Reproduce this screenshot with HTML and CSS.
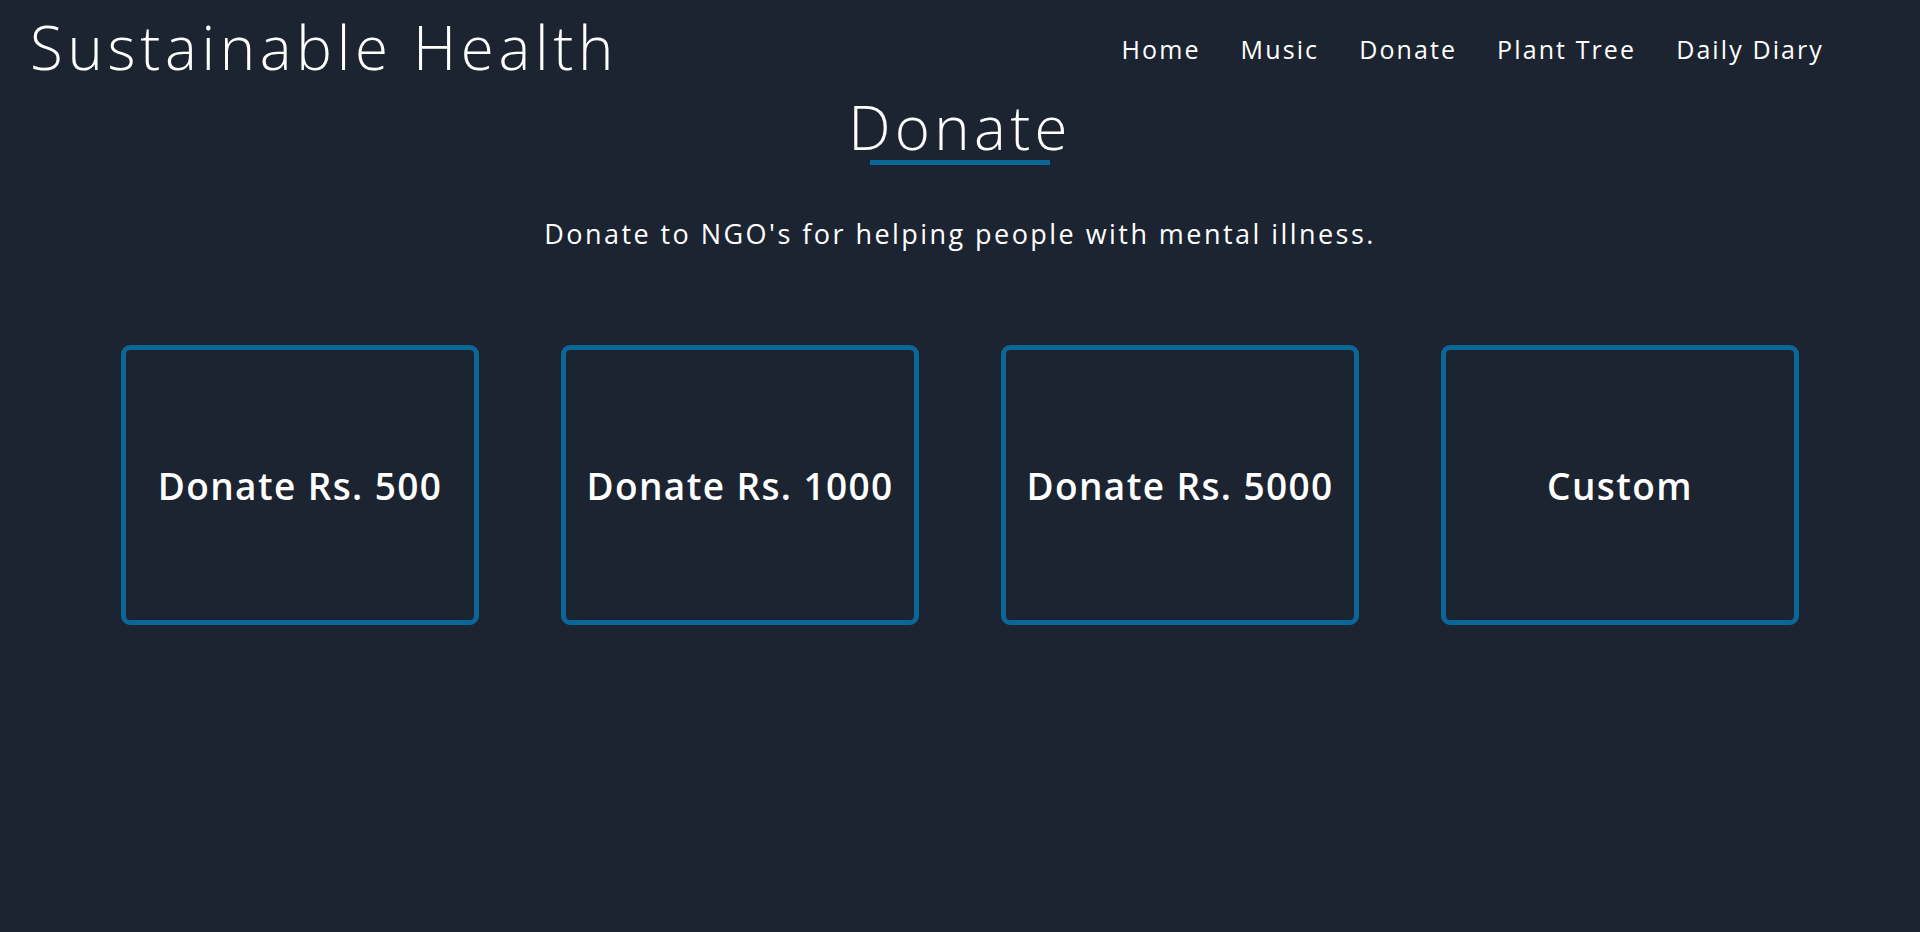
FILE: index.html
```html
<!DOCTYPE html>
<html lang="en">
<head>
<meta charset="utf-8">
<title>Sustainable Health - Donate</title>
<link rel="stylesheet" href="styles.css">
</head>
<body>
<header class="site-header">
  <div class="logo">Sustainable Health</div>
  <nav class="nav">
    <a href="#">Home</a>
    <a href="#">Music</a>
    <a href="#">Donate</a>
    <a href="#">Plant Tree</a>
    <a href="#">Daily Diary</a>
  </nav>
</header>
<main class="donate">
  <h1 class="title">Donate</h1>
  <div class="title-bar"></div>
  <p class="lead">Donate to NGO's for helping people with mental illness.</p>
  <div class="cards">
    <a class="card" href="#">Donate Rs. 500</a>
    <a class="card" href="#">Donate Rs. 1000</a>
    <a class="card" href="#">Donate Rs. 5000</a>
    <a class="card" href="#">Custom</a>
  </div>
</main>
</body>
</html>
```
FILE: styles.css
```css
* { box-sizing: border-box; }
html, body { margin: 0; padding: 0; }
body {
  background: #1c2431;
  color: #ffffff;
  font-family: "Open Sans", "Liberation Sans", sans-serif;
  min-height: 932px;
}
.site-header {
  display: flex;
  justify-content: space-between;
  align-items: flex-start;
  padding: 12px 96px 0 30px;
}
.logo {
  font-size: 60px;
  font-weight: 300;
  line-height: 70px;
  letter-spacing: 4.7px;
}
.nav {
  display: flex;
  gap: 40px;
  margin-top: 22px;
}
.nav a {
  color: #ffffff;
  text-decoration: none;
  font-size: 25px;
  line-height: 30px;
  letter-spacing: 2.1px;
}
.donate {
  display: flex;
  flex-direction: column;
  align-items: center;
}
.title {
  margin: 11px 0 0;
  font-size: 60px;
  font-weight: 300;
  line-height: 68px;
  letter-spacing: 4.3px;
}
.title-bar {
  width: 180px;
  height: 5px;
  margin-top: -1px;
  background: #0a6898;
}
.lead {
  margin: 54px 0 0;
  font-size: 27px;
  line-height: 30px;
  letter-spacing: 2.45px;
}
.cards {
  display: flex;
  justify-content: center;
  gap: 82px;
  margin-top: 96px;
}
.card {
  width: 358px;
  height: 280px;
  border: 5px solid #0a6898;
  border-radius: 9px;
  display: flex;
  align-items: center;
  justify-content: center;
  color: #ffffff;
  text-decoration: none;
  font-size: 37px;
  font-weight: 600;
  letter-spacing: 1.4px;
}
```
